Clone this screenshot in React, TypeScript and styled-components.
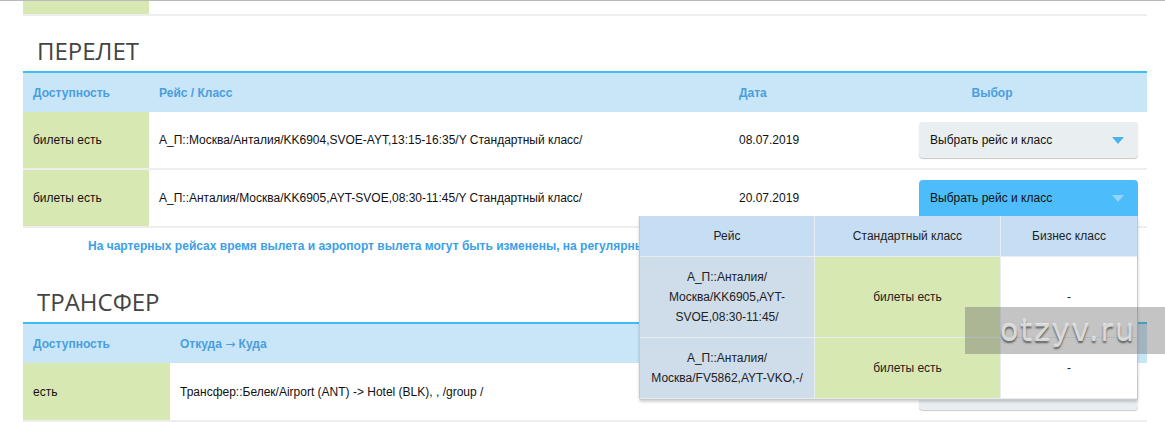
import React from "react";
import styled, { createGlobalStyle, css } from "styled-components";

const GlobalStyle = createGlobalStyle`
  html, body { margin: 0; padding: 0; background: #fff; }
  body {
    font-family: "Liberation Sans", Arial, sans-serif;
    font-size: 12px;
    color: #111;
  }
`;

const GREEN = "#d8e8b3";
const HEAD_BG = "#c8e6f8";
const HEAD_TEXT = "#4a9edd";

const Page = styled.div`
  position: relative;
  border-top: 1px solid #b9b9b9;
  padding: 0 18px 0 23px;
  overflow: hidden;
`;

const Title = styled.h2`
  margin: 0;
  padding: 18px 0 3px 14px;
  font-family: "Open Sans", "Noto Sans", sans-serif;
  font-weight: 400;
  font-size: 24px;
  line-height: 34px;
  color: #444;
`;

const HeaderRow = styled.div<{ $cols: string }>`
  display: grid;
  grid-template-columns: ${(p) => p.$cols};
  height: 39px;
  align-items: center;
  background: ${HEAD_BG};
  border-top: 2px solid #3cbef0;
`;

const HeadCell = styled.div<{ $center?: boolean }>`
  padding: 0 10px;
  font-weight: 700;
  color: ${HEAD_TEXT};
  text-align: ${(p) => (p.$center ? "center" : "left")};
  white-space: nowrap;
`;

const Arrow = styled.span`
  font-family: "DejaVu Sans", sans-serif;
  font-weight: 400;
  font-size: 12px;
`;

const Row = styled.div<{ $cols: string; $h?: number }>`
  display: grid;
  grid-template-columns: ${(p) => p.$cols};
  height: ${(p) => p.$h ?? 56}px;
  border-bottom: 2px solid #eeeeee;
`;

const Cell = styled.div<{ $green?: boolean }>`
  display: flex;
  align-items: center;
  padding: 0 10px;
  white-space: nowrap;
  background: ${(p) => (p.$green ? GREEN : "transparent")};
`;

const SelectCell = styled.div`
  display: flex;
  align-items: center;
  justify-content: flex-end;
  padding-right: 9px;
`;

const SelectWrap = styled.div`
  position: relative;
  width: 219px;
`;

const SelectButton = styled.div<{ $open?: boolean }>`
  display: flex;
  align-items: center;
  justify-content: space-between;
  height: 36px;
  padding: 0 14px 0 11px;
  border-radius: 4px;
  background: #e9eef1;
  box-shadow: 0 1px 1px rgba(0, 0, 0, 0.22);
  color: #111;
  ${(p) =>
    p.$open &&
    css`
      background: #4dbcfb;
      border-radius: 4px 4px 0 0;
      box-shadow: none;
    `}
`;

const Caret = styled.span<{ $open?: boolean }>`
  width: 0;
  height: 0;
  border-left: 6px solid transparent;
  border-right: 6px solid transparent;
  border-top: 7px solid ${(p) => (p.$open ? "#93d4fb" : "#4ab3ef")};
`;

const Dropdown = styled.div`
  position: absolute;
  top: 100%;
  right: 0;
  width: 499px;
  z-index: 10;
  display: grid;
  grid-template-columns: 175px 186px 1fr;
  background: #fff;
  border: 1px solid #c8c8c8;
  border-top: none;
  border-radius: 0 0 3px 3px;
  box-shadow: 0 2px 3px rgba(0, 0, 0, 0.18);
  overflow: hidden;
  box-sizing: border-box;
`;

const DCell = styled.div<{ $kind: "head" | "flight" | "ok" | "none" }>`
  display: flex;
  align-items: center;
  justify-content: center;
  text-align: center;
  padding: 10px 8px;
  line-height: 20px;
  color: #222;
  border-right: 1px solid #e6edf3;
  border-bottom: 1px solid #e6edf3;
  &:nth-child(3n) { border-right: none; }
  background: ${(p) =>
    p.$kind === "head"
      ? "#c6def4"
      : p.$kind === "flight"
      ? "#cfdcea"
      : p.$kind === "ok"
      ? GREEN
      : "#fff"};
`;

const Note = styled.div`
  padding: 11px 0 14px 65px;
  line-height: 14px;
  font-weight: 700;
  color: #3ba0e8;
  white-space: nowrap;
`;

const Watermark = styled.div`
  position: absolute;
  top: 306px;
  right: 0;
  width: 200px;
  height: 47px;
  z-index: 20;
  background: rgba(100, 100, 100, 0.38);
  display: flex;
  align-items: center;
  padding-left: 35px;
  box-sizing: border-box;
  font-family: "DejaVu Sans", sans-serif;
  font-size: 30px;
  letter-spacing: 2px;
  color: #d9d9d9;
  text-shadow: 0 2px 2px rgba(0, 0, 0, 0.55), 0 -1px 0 rgba(255, 255, 255, 0.6);
`;

const FLIGHT_COLS = "126px 580px 108px 1fr";
const TRANSFER_COLS = "147px 559px 108px 1fr";

const Select = ({ open }: { open?: boolean }) => (
  <SelectWrap>
    <SelectButton $open={open}>
      <span>Выбрать рейс и класс</span>
      <Caret $open={open} />
    </SelectButton>
    {open && (
      <Dropdown>
        <DCell $kind="head">Рейс</DCell>
        <DCell $kind="head">Стандартный класс</DCell>
        <DCell $kind="head">Бизнес класс</DCell>
        <DCell $kind="flight">
          А_П::Анталия/
          <br />
          Москва/KK6905,AYT-
          <br />
          SVOE,08:30-11:45/
        </DCell>
        <DCell $kind="ok">билеты есть</DCell>
        <DCell $kind="none">-</DCell>
        <DCell $kind="flight">
          А_П::Анталия/
          <br />
          Москва/FV5862,AYT-VKO,-/
        </DCell>
        <DCell $kind="ok">билеты есть</DCell>
        <DCell $kind="none">-</DCell>
      </Dropdown>
    )}
  </SelectWrap>
);

export default function App() {
  return (
    <>
      <GlobalStyle />
      <Page>
        <Row $cols={FLIGHT_COLS} $h={13}>
          <Cell $green />
        </Row>

        <Title>ПЕРЕЛЕТ</Title>
        <HeaderRow $cols={FLIGHT_COLS}>
          <HeadCell>Доступность</HeadCell>
          <HeadCell>Рейс / Класс</HeadCell>
          <HeadCell>Дата</HeadCell>
          <HeadCell $center>Выбор</HeadCell>
        </HeaderRow>
        <Row $cols={FLIGHT_COLS}>
          <Cell $green>билеты есть</Cell>
          <Cell>А_П::Москва/Анталия/KK6904,SVOE-AYT,13:15-16:35/Y Стандартный класс/</Cell>
          <Cell>08.07.2019</Cell>
          <SelectCell>
            <Select />
          </SelectCell>
        </Row>
        <Row $cols={FLIGHT_COLS}>
          <Cell $green>билеты есть</Cell>
          <Cell>А_П::Анталия/Москва/KK6905,AYT-SVOE,08:30-11:45/Y Стандартный класс/</Cell>
          <Cell>20.07.2019</Cell>
          <SelectCell>
            <Select open />
          </SelectCell>
        </Row>

        <Note>
          На чартерных рейсах время вылета и аэропорт вылета могут быть изменены, на регулярных рейсах — только время вылета.
        </Note>

        <Title>ТРАНСФЕР</Title>
        <HeaderRow $cols={TRANSFER_COLS}>
          <HeadCell>Доступность</HeadCell>
          <HeadCell>
            Откуда <Arrow>→</Arrow> Куда
          </HeadCell>
          <HeadCell>Дата</HeadCell>
          <HeadCell $center>Выбор</HeadCell>
        </HeaderRow>
        <Row $cols={TRANSFER_COLS} $h={57}>
          <Cell $green>есть</Cell>
          <Cell>Трансфер::Белек/Airport (ANT) -&gt; Hotel (BLK), , /group /</Cell>
          <Cell>20.07.2019</Cell>
          <SelectCell>
            <Select />
          </SelectCell>
        </Row>
        <Row $cols={TRANSFER_COLS} $h={20}>
          <Cell $green />
        </Row>

        <Watermark>otzyv.ru</Watermark>
      </Page>
    </>
  );
}
